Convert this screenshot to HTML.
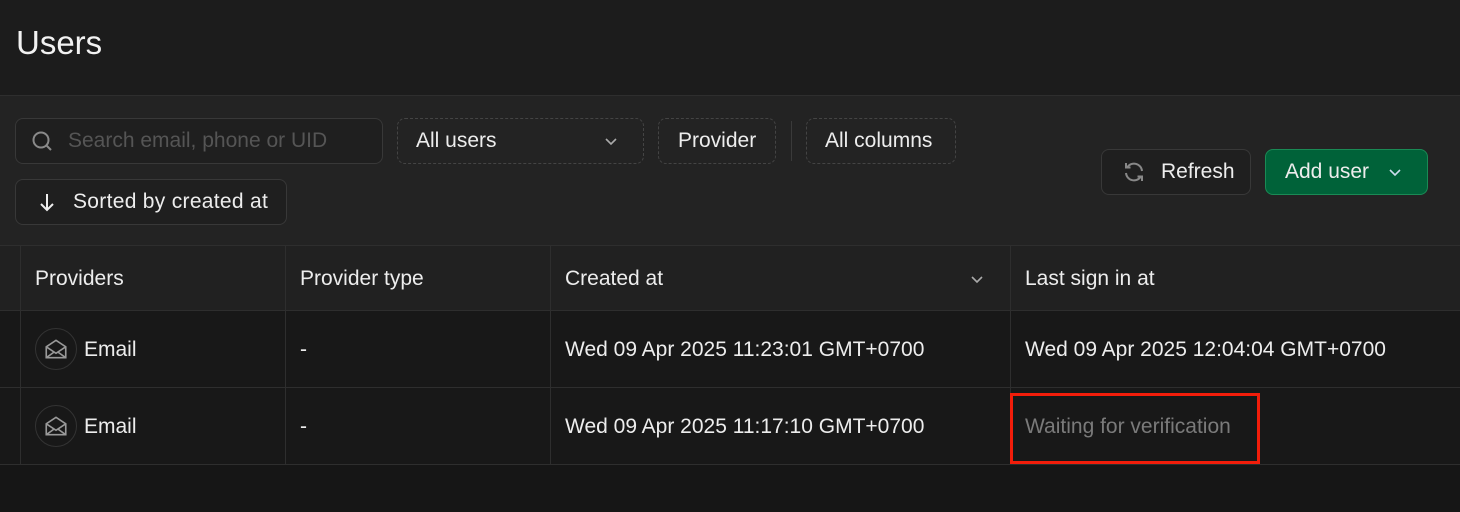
<!DOCTYPE html>
<html><head><style>
*{box-sizing:border-box;margin:0;padding:0}
body{width:1460px;height:512px;background:#1c1c1c;font-family:"Liberation Sans",sans-serif;color:#ededed;position:relative;overflow:hidden}
.abs{position:absolute}
.title{left:16px;top:24px;font-size:33px;color:#f2f2f2}
.tb{left:0;top:95px;width:1460px;height:150px;background:#232323;border-top:1px solid #2e2e2e}
.btn{position:absolute;height:46px;border-radius:8px;font-size:21px;display:flex;align-items:center}
.dash{border:1px dashed #444}
.solid{border:1px solid #383838}
.tbl{left:0;top:245px;width:1460px;height:220px;border-top:1px solid #2e2e2e}
.hdr{position:absolute;left:0;top:0;width:1460px;height:65px;background:#212121;border-bottom:1px solid #2e2e2e}
.row{position:absolute;left:0;width:1460px;height:77px;background:#181818;border-bottom:1px solid #2e2e2e}
.vl{position:absolute;top:0;width:1px;height:219px;background:#2e2e2e}
.c{position:absolute;font-size:21px;color:#ededed}
.ic{position:absolute;width:42px;height:42px;border-radius:50%;border:1px solid #333;display:flex;align-items:center;justify-content:center}
</style></head><body>
<div class="abs title">Users</div>
<div class="abs tb">
 <div class="btn solid" style="left:15px;top:22px;width:368px;background:#1f1f1f">
  <svg style="margin-left:14px" width="24" height="24" viewBox="0 0 24 24" fill="none" stroke="#8a8a8a" stroke-width="2"><circle cx="11" cy="11" r="7.5"/><path d="M16.5 16.5L21 21"/></svg>
  <span style="margin-left:14px;color:#555">Search email, phone or UID</span></div>
 <div class="btn dash" style="left:397px;top:22px;width:247px;padding-left:18px">All users
  <svg style="position:absolute;right:24px" width="16" height="16" viewBox="0 0 16 16" fill="none" stroke="#aaa" stroke-width="1.6"><path d="M3 6l5 5 5-5"/></svg></div>
 <div class="btn dash" style="left:658px;top:22px;width:118px;padding-left:19px">Provider</div>
 <div class="abs" style="left:791px;top:25px;width:1px;height:40px;background:#3a3a3a"></div>
 <div class="btn dash" style="left:806px;top:22px;width:150px;padding-left:18px">All columns</div>
 <div class="btn solid" style="left:15px;top:83px;width:272px;background:#1f1f1f">
  <svg style="margin-left:20px" width="22" height="22" viewBox="0 0 22 22" fill="none" stroke="#eee" stroke-width="2"><path d="M11 3v16M5 13l6 6 6-6"/></svg>
  <span style="margin-left:15px;letter-spacing:0.3px">Sorted by created at</span></div>
 <div class="btn solid" style="left:1101px;top:53px;width:150px;background:#1f1f1f">
  <svg style="margin-left:20px" width="24" height="24" viewBox="0 0 24 24" fill="none" stroke="#888" stroke-width="2"><path d="M20 11A8 8 0 0 0 5.5 7M4 3v4.5h4.5M4 13a8 8 0 0 0 14.5 4M20 21v-4.5h-4.5"/></svg>
  <span style="margin-left:15px">Refresh</span></div>
 <div class="btn" style="left:1265px;top:53px;width:163px;background:#006239;border:1px solid #1a8a55;padding-left:19px">Add user
  <svg style="position:absolute;right:24px" width="16" height="16" viewBox="0 0 16 16" fill="none" stroke="#cde" stroke-width="1.6"><path d="M3 6l5 5 5-5"/></svg></div>
</div>
<div class="abs tbl">
 <div class="hdr">
  <div class="c" style="left:35px;top:21px">Providers</div>
  <div class="c" style="left:300px;top:21px">Provider type</div>
  <div class="c" style="left:565px;top:21px">Created at</div>
  <svg class="abs" style="left:969px;top:25px" width="16" height="16" viewBox="0 0 16 16" fill="none" stroke="#aaa" stroke-width="1.6"><path d="M3 6l5 5 5-5"/></svg>
  <div class="c" style="left:1025px;top:21px">Last sign in at</div>
 </div>
 <div class="row" style="top:65px">
  <div class="ic" style="left:35px;top:17px"><svg width="26" height="26" viewBox="0 0 24 24" fill="none" stroke="#999" stroke-width="1.5"><path d="M3 10l9-6 9 6v10H3z"/><path d="M3 10l9 6 9-6M3 20l7-5M21 20l-7-5"/></svg></div>
  <div class="c" style="left:84px;top:27px">Email</div>
  <div class="c" style="left:300px;top:27px">-</div>
  <div class="c" style="left:565px;top:27px">Wed 09 Apr 2025 11:23:01 GMT+0700</div>
  <div class="c" style="left:1025px;top:27px">Wed 09 Apr 2025 12:04:04 GMT+0700</div>
 </div>
 <div class="row" style="top:142px">
  <div class="ic" style="left:35px;top:17px"><svg width="26" height="26" viewBox="0 0 24 24" fill="none" stroke="#999" stroke-width="1.5"><path d="M3 10l9-6 9 6v10H3z"/><path d="M3 10l9 6 9-6M3 20l7-5M21 20l-7-5"/></svg></div>
  <div class="c" style="left:84px;top:27px">Email</div>
  <div class="c" style="left:300px;top:27px">-</div>
  <div class="c" style="left:565px;top:27px">Wed 09 Apr 2025 11:17:10 GMT+0700</div>
  <div class="c" style="left:1025px;top:27px;color:#7a7a7a">Waiting for verification</div>
 </div>
 <div class="vl" style="left:20px"></div><div class="vl" style="left:285px"></div><div class="vl" style="left:550px"></div><div class="vl" style="left:1010px"></div>
</div>
<div class="abs" style="left:0;top:465px;width:1460px;height:47px;background:#161616"></div>
<div class="abs" style="left:1010px;top:393px;width:250px;height:71px;border:3px solid #f21d0a"></div>
</body></html>
